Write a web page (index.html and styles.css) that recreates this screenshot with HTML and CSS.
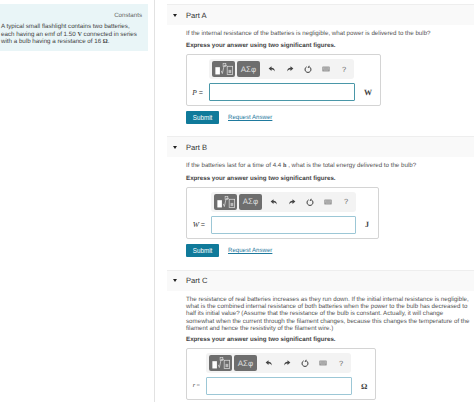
FILE: index.html
```html
<!DOCTYPE html>
<html lang="en">
<head>
<meta charset="UTF-8" />
<meta name="viewport" content="width=device-width, initial-scale=1" />
<title>Flashlight problem</title>
<link rel="stylesheet" href="styles.css">
</head>
<body>

<svg class="icon-defs" width="0" height="0">
  <symbol id="i-template" viewBox="0 0 22 14">
    <rect x="1.5" y="5" width="5" height="8" fill="#fff"/>
    <path d="M8 9l1.2 3 2-9h3" fill="none" stroke="#ddd" stroke-width=".8"/>
    <rect x="10" y="1" width="3" height="3" fill="none" stroke="#ddd" stroke-width=".7"/>
    <rect x="14.5" y="4" width="6" height="9" fill="none" stroke="#ddd" stroke-width=".8"/>
    <rect x="16" y="8" width="3" height="3.5" fill="#bbb"/>
  </symbol>
  <symbol id="i-undo" viewBox="0 0 10 10">
    <path d="M4.4 1.5L.8 4.5l3.6 3V5.6c1.900 0 3.200.7 4.200 2.400 0-2.600-1.600-4.300-4.200-4.500z" fill="#444"/>
  </symbol>
  <symbol id="i-redo" viewBox="0 0 10 10">
    <path d="M5.600 1.500l3.600 3-3.600 3V5.600c-1.900 0-3.200.7-4.200 2.400 0-2.600 1.600-4.300 4.200-4.500z" fill="#444"/>
  </symbol>
  <symbol id="i-reset" viewBox="0 0 10 10">
    <path d="M3.300 2.300a3.700 3.700 0 1 0 3.400 0" fill="none" stroke="#333" stroke-width="1.200"/>
    <path d="M6.600 .3v3H4.400z" fill="#333"/>
  </symbol>
  <symbol id="i-keys" viewBox="0 0 10 8">
    <rect x=".3" y="1" width="9.400" height="6" rx=".6" fill="#9a9a9a"/>
    <path d="M1.500 2.600h7M1.500 4h7M3 5.500h4" stroke="#dedede" stroke-width=".7" stroke-dasharray="1 .5"/>
  </symbol>
</svg>

<div class="page">
  <aside class="side">
    <div class="constants">
      <div class="constants-title">Constants</div>
      <p>A typical small flashlight contains two batteries, each having an emf of 1.50 <b class="unit">V</b> connected in series with a bulb having a resistance of 16 <b class="unit">Ω</b>.</p>
    </div>
  </aside>

  <main class="parts">
    <section class="part part-a">
      <h2 class="part-head"><span class="caret"></span>Part A</h2>
      <div class="part-body">
        <p class="question">If the internal resistance of the batteries is negligible, what power is delivered to the bulb?</p>
        <p class="hint">Express your answer using two significant figures.</p>
        <div class="answer-box">
          <div class="toolbar">
            <span class="tool-btn tool-tpl"><svg class="tpl-icon"><use href="#i-template"/></svg></span>
            <span class="tool-btn tool-sym">ΑΣφ</span>
            <svg class="tool-ic"><use href="#i-undo"/></svg>
            <svg class="tool-ic"><use href="#i-redo"/></svg>
            <svg class="tool-ic"><use href="#i-reset"/></svg>
            <svg class="tool-ic"><use href="#i-keys"/></svg>
            <span class="tool-q">?</span>
          </div>
          <div class="answer-row">
            <span class="var"><i>P</i> =</span>
            <input class="answer-input focused" type="text">
            <span class="answer-unit">W</span>
          </div>
        </div>
        <div class="actions"><button class="submit">Submit</button><a class="request" href="#">Request Answer</a></div>
      </div>
    </section>

    <section class="part part-b">
      <h2 class="part-head"><span class="caret"></span>Part B</h2>
      <div class="part-body">
        <p class="question">If the batteries last for a time of 4.4 <b class="unit">h</b> , what is the total energy delivered to the bulb?</p>
        <p class="hint">Express your answer using two significant figures.</p>
        <div class="answer-box">
          <div class="toolbar">
            <span class="tool-btn tool-tpl"><svg class="tpl-icon"><use href="#i-template"/></svg></span>
            <span class="tool-btn tool-sym">ΑΣφ</span>
            <svg class="tool-ic"><use href="#i-undo"/></svg>
            <svg class="tool-ic"><use href="#i-redo"/></svg>
            <svg class="tool-ic"><use href="#i-reset"/></svg>
            <svg class="tool-ic"><use href="#i-keys"/></svg>
            <span class="tool-q">?</span>
          </div>
          <div class="answer-row">
            <span class="var"><i>W</i> =</span>
            <input class="answer-input" type="text">
            <span class="answer-unit">J</span>
          </div>
        </div>
        <div class="actions"><button class="submit">Submit</button><a class="request" href="#">Request Answer</a></div>
      </div>
    </section>

    <section class="part part-c">
      <h2 class="part-head"><span class="caret"></span>Part C</h2>
      <div class="part-body">
        <p class="question">The resistance of real batteries increases as they run down. If the initial internal resistance is negligible, what is the combined internal resistance of both batteries when the power to the bulb has decreased to half its initial value? (Assume that the resistance of the bulb is constant. Actually, it will change somewhat when the current through the filament changes, because this changes the temperature of the filament and hence the resistivity of the filament wire.)</p>
        <p class="hint">Express your answer using two significant figures.</p>
        <div class="answer-box">
          <div class="toolbar">
            <span class="tool-btn tool-tpl"><svg class="tpl-icon"><use href="#i-template"/></svg></span>
            <span class="tool-btn tool-sym">ΑΣφ</span>
            <svg class="tool-ic"><use href="#i-undo"/></svg>
            <svg class="tool-ic"><use href="#i-redo"/></svg>
            <svg class="tool-ic"><use href="#i-reset"/></svg>
            <svg class="tool-ic"><use href="#i-keys"/></svg>
            <span class="tool-q">?</span>
          </div>
          <div class="answer-row">
            <span class="var"><i>r</i> =</span>
            <input class="answer-input" type="text">
            <span class="answer-unit">Ω</span>
          </div>
        </div>
      </div>
    </section>
  </main>
</div>

</body>
</html>
```

FILE: styles.css
```css
html, body {
  margin: 0;
  height: 402px;
  overflow: hidden;
}
body {
  font-family: 'Liberation Sans', sans-serif;
  background-color: #fff;
  color: #444;
  text-rendering: geometricPrecision;
}
p {
  margin: 0;
}
.icon-defs {
  position: absolute;
}
.page {
  display: flex;
  height: 402px;
}
.side {
  width: 155px;
  box-sizing: border-box;
  flex: none;
  padding-top: 4px;
  border-right: 1px solid #e2e2e2;
}
.constants {
  width: 148px;
  height: 47px;
  box-sizing: border-box;
  padding: 8px 6px 0 1px;
  background-color: #e9f5f7;
  font-size: 6.200px;
  line-height: 7.500px;
}
.constants-title {
  text-align: right;
  color: #666;
  margin-bottom: 3.500px;
  font-size: 6.200px;
}
.unit {
  display: inline-block;
  font-family: 'Liberation Serif', serif;
  font-weight: bold;
  line-height: 6.500px;
}
.parts {
  flex: 1;
  min-width: 0;
  padding-left: 12px;
  padding-top: 4px;
}
.part-head {
  display: flex;
  align-items: center;
  height: 21px;
  margin: 0;
  padding-left: 6px;
  background-color: #f9f9f9;
  border-top: 1px solid #eee;
  box-sizing: border-box;
  font-size: 7.600px;
  font-weight: normal;
  color: #333;
}
.caret {
  width: 0;
  height: 0;
  margin-right: 9px;
  border-left: 2.500px solid transparent;
  border-right: 2.500px solid transparent;
  border-top: 3px solid #222;
}
.part-body {
  padding: 0 4px 0 19px;
}
.question {
  font-size: 6.200px;
  line-height: 7.300px;
  color: #555;
  padding-top: 5px;
}
.hint {
  font-size: 6.200px;
  font-weight: bold;
  color: #444;
  line-height: 8px;
  margin-top: 5px;
}
.answer-box {
  width: 195px;
  height: 52px;
  box-sizing: border-box;
  margin-top: 4px;
  padding-top: 4px;
  border: 1px solid #d4d4d4;
  border-radius: 2px;
}
.toolbar {
  display: flex;
  align-items: center;
  width: 145px;
  height: 20px;
  box-sizing: border-box;
  margin-left: 22px;
  padding: 0 3px;
  background-color: #f3f3f3;
  border-radius: 3px;
}
.tool-btn {
  display: flex;
  align-items: center;
  justify-content: center;
  height: 16px;
  background-color: #6e6e6e;
  border-radius: 2px;
  color: #ddd;
}
.tool-tpl {
  width: 23px;
}
.tpl-icon {
  width: 20px;
  height: 14px;
}
.tool-sym {
  width: 23px;
  margin-left: 2px;
  font-size: 8px;
}
.tool-ic {
  width: 8px;
  height: 8px;
  margin-left: 10px;
}
.tool-sym + .tool-ic {
  margin-left: 8px;
}
.tool-q {
  margin-left: 12px;
  font-size: 7.500px;
  color: #666;
}
.answer-row {
  display: flex;
  align-items: center;
  margin-top: 4px;
  height: 18px;
}
.var {
  width: 16px;
  margin: 0 6px 0 0;
  text-align: right;
  flex: none;
  font-family: 'Liberation Serif', serif;
  font-size: 7.500px;
  color: #333;
}
.answer-input {
  width: 146px;
  height: 18px;
  box-sizing: border-box;
  margin: 0;
  padding: 0;
  border: 1px solid #9cc7d6;
  border-radius: 1px;
  background: #fff;
}
.answer-input.focused {
  border: 1.500px solid #4a97a8;
}
.answer-unit {
  margin-left: 9px;
  font-family: 'Liberation Serif', serif;
  font-size: 8px;
  font-weight: bold;
  color: #444;
}
.actions {
  display: flex;
  align-items: center;
  margin-top: 5px;
  height: 13px;
}
.submit {
  width: 33px;
  height: 13px;
  padding: 0;
  border: none;
  border-radius: 1px;
  background-color: #107a9a;
  color: #fff;
  font-family: 'Liberation Sans', sans-serif;
  font-size: 6.300px;
}
.request {
  margin-left: 9px;
  font-size: 6.100px;
  color: #1f7a9e;
}
.part-b {
  margin-top: 12px;
}
.part-b .answer-box {
  width: 193px;
}
.part-b .toolbar {
  margin-left: 24px;
}
.part-b .answer-input {
  width: 145px;
}
.part-b .var {
  width: 18px;
}
.part-c {
  margin-top: 13px;
}
.part-c .answer-box {
  width: 190px;
}
.part-c .toolbar {
  margin-left: 19px;
}
.part-c .var {
  width: 13px;
  font-size: 6px;
}
.part-c .hint {
  margin-top: 4px;
}
```
